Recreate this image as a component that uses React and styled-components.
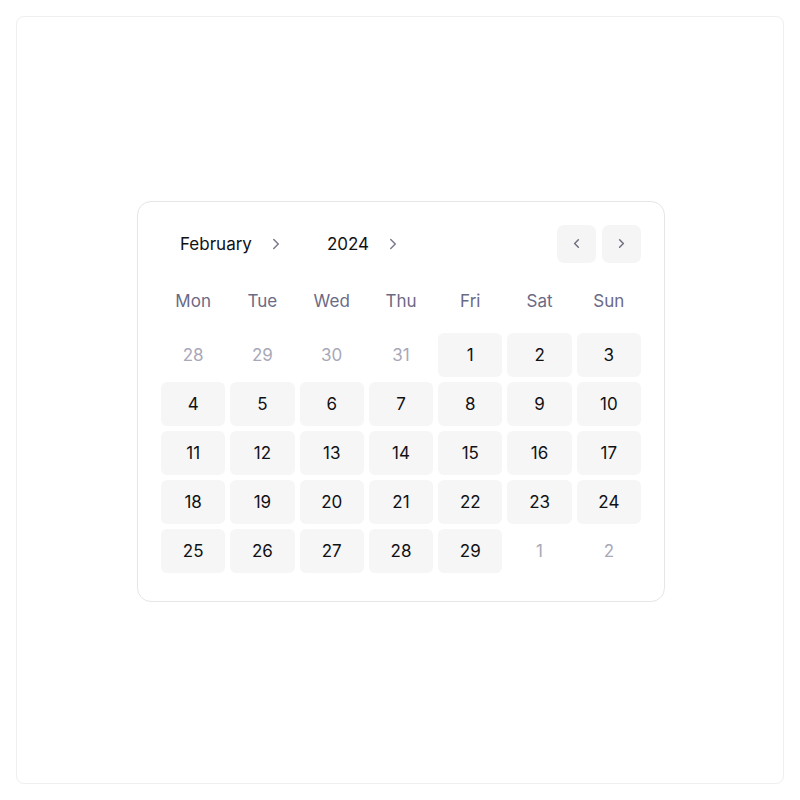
import React from "react";
import styled, { createGlobalStyle } from "styled-components";

const GlobalStyle = createGlobalStyle`
  html, body {
    margin: 0;
    padding: 0;
    background: #ffffff;
  }
  body {
    font-family: Inter, "Noto Sans", sans-serif;
  }
`

const Page = styled.main`
  box-sizing: border-box;
  width: 800px;
  height: 800px;
  padding: 16px;
`

const Frame = styled.section`
  box-sizing: border-box;
  height: 100%;
  padding: 2px 0 0 2px;
  border: 1px solid #efefef;
  border-radius: 8px;
  display: flex;
  align-items: center;
  justify-content: center;
`

const Card = styled.div`
  box-sizing: border-box;
  width: 528px;
  padding: 23px 23px 28px;
  border: 1px solid #e6e6e8;
  border-radius: 14px;
  background: #fff;
`

const Header = styled.header`
  display: flex;
  align-items: center;
  height: 38px;
`

const Picker = styled.button`
  display: flex;
  align-items: center;
  gap: 15px;
  background: none;
  border: 0;
  padding: 0;
  margin-left: ${props => props.offset || 0}px;
  font-family: Inter, sans-serif;
  font-size: 17px;
  color: #111114;
  cursor: pointer;
`

const NavGroup = styled.div`
  display: flex;
  gap: 6px;
  margin-left: auto;
`

const NavButton = styled.button`
  width: 39px;
  height: 38px;
  border: 0;
  border-radius: 7px;
  background: #f5f5f6;
  display: flex;
  align-items: center;
  justify-content: center;
  padding: 0;
  cursor: pointer;
`

const Weekdays = styled.div`
  display: grid;
  grid-template-columns: repeat(7, 1fr);
  column-gap: 5px;
  margin: 16px 0 10px;
`

const Weekday = styled.div`
  height: 44px;
  display: flex;
  align-items: center;
  justify-content: center;
  font-size: 17px;
  color: #6b6a86;
`

const Days = styled.div`
  display: grid;
  grid-template-columns: repeat(7, 1fr);
  gap: 5px;
`

const Day = styled.button`
  height: 44px;
  border: 0;
  border-radius: 6px;
  background: ${props => (props.$outside ? "transparent" : "#f6f6f7")};
  color: ${props => (props.$outside ? "#a9a8b8" : "#111114")};
  font-family: Inter, sans-serif;
  font-size: 17px;
  padding: 0;
  cursor: pointer;
`

function Chevron({ dir = "right", size = 18, color = "#7a7a8c", weight = 2 }) {
  const d = dir === "right" ? "M9 6 L15 12 L9 18" : "M15 6 L9 12 L15 18"
  return (
    <svg width={size} height={size} viewBox="0 0 24 24" fill="none">
      <path d={d} stroke={color} strokeWidth={weight} strokeLinecap="round" strokeLinejoin="round" />
    </svg>
  )
}

const weekdays = ["Mon", "Tue", "Wed", "Thu", "Fri", "Sat", "Sun"]

function buildDays() {
  const days = []
  for (let d = 28; d <= 31; d++) days.push({ n: d, outside: true })
  for (let d = 1; d <= 29; d++) days.push({ n: d, outside: false })
  for (let d = 1; d <= 2; d++) days.push({ n: d, outside: true })
  return days
}

export default function App() {
  const days = buildDays()
  return (
    <>
      <GlobalStyle />
      <Page>
        <Frame>
          <Card>
            <Header>
              <Picker offset={19}>
                February
                <Chevron />
              </Picker>
              <Picker offset={42}>
                2024
                <Chevron />
              </Picker>
              <NavGroup>
                <NavButton aria-label="Previous month">
                  <Chevron dir="left" size={15} color="#6f6f80" weight={2.4} />
                </NavButton>
                <NavButton aria-label="Next month">
                  <Chevron size={15} color="#6f6f80" weight={2.4} />
                </NavButton>
              </NavGroup>
            </Header>
            <Weekdays>
              {weekdays.map(w => (
                <Weekday key={w}>{w}</Weekday>
              ))}
            </Weekdays>
            <Days>
              {days.map((d, i) => (
                <Day key={i} $outside={d.outside}>{d.n}</Day>
              ))}
            </Days>
          </Card>
        </Frame>
      </Page>
    </>
  )
}
